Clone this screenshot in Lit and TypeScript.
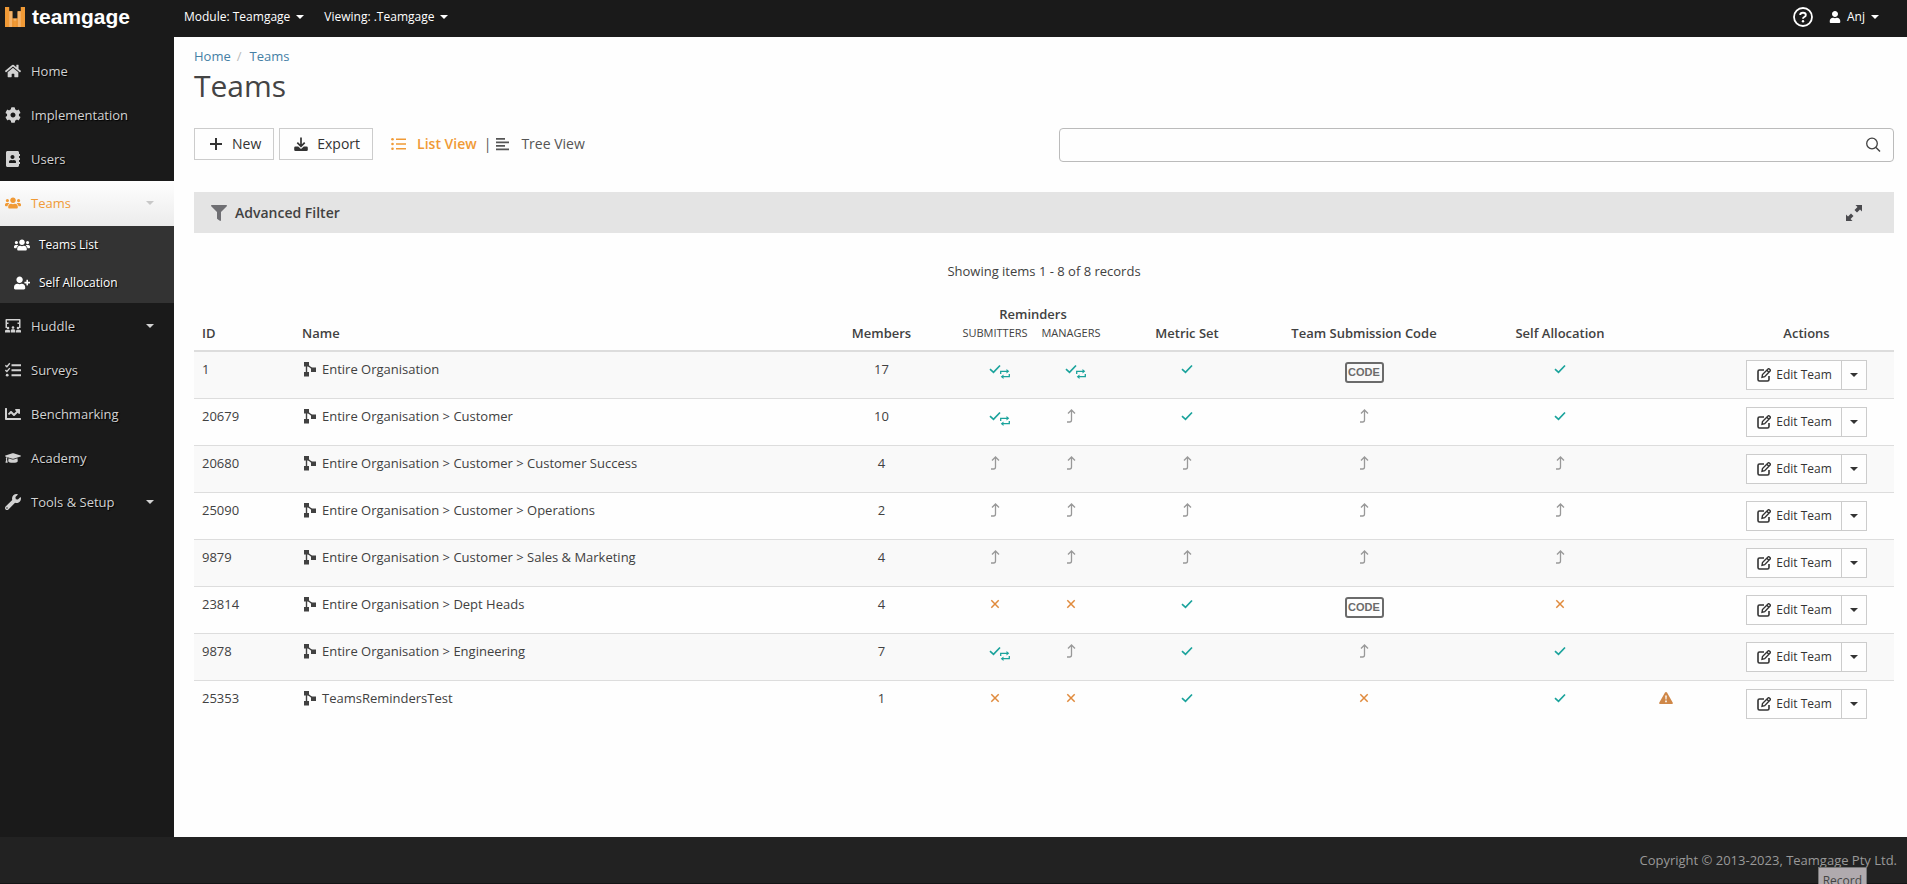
import { LitElement, html, svg, css, nothing } from "lit";
import { customElement } from "lit/decorators.js";
import { classMap } from "lit/directives/class-map.js";

type Status = "repeat" | "check" | "inherit" | "cross" | "code";

interface Team {
  id: string;
  name: string;
  members: number;
  submitters: Status;
  managers: Status;
  metric: Status;
  code: Status;
  self: Status;
  warning?: boolean;
}

const teams: Team[] = [
  { id: "1", name: "Entire Organisation", members: 17, submitters: "repeat", managers: "repeat", metric: "check", code: "code", self: "check" },
  { id: "20679", name: "Entire Organisation > Customer", members: 10, submitters: "repeat", managers: "inherit", metric: "check", code: "inherit", self: "check" },
  { id: "20680", name: "Entire Organisation > Customer > Customer Success", members: 4, submitters: "inherit", managers: "inherit", metric: "inherit", code: "inherit", self: "inherit" },
  { id: "25090", name: "Entire Organisation > Customer > Operations", members: 2, submitters: "inherit", managers: "inherit", metric: "inherit", code: "inherit", self: "inherit" },
  { id: "9879", name: "Entire Organisation > Customer > Sales & Marketing", members: 4, submitters: "inherit", managers: "inherit", metric: "inherit", code: "inherit", self: "inherit" },
  { id: "23814", name: "Entire Organisation > Dept Heads", members: 4, submitters: "cross", managers: "cross", metric: "check", code: "code", self: "cross" },
  { id: "9878", name: "Entire Organisation > Engineering", members: 7, submitters: "repeat", managers: "inherit", metric: "check", code: "inherit", self: "check" },
  { id: "25353", name: "TeamsRemindersTest", members: 1, submitters: "cross", managers: "cross", metric: "check", code: "cross", self: "check", warning: true },
];

const shapes = {
  home: { box: "0 0 576 512", art: svg`<path d="M280.37 148.26L96 300.11V464a16 16 0 0 0 16 16l112.06-.29a16 16 0 0 0 15.92-16V368a16 16 0 0 1 16-16h64a16 16 0 0 1 16 16v95.64a16 16 0 0 0 16 16.05L464 480a16 16 0 0 0 16-16V300L295.67 148.26a12.19 12.19 0 0 0-15.3 0zM571.6 251.47L488 182.56V44.05a12 12 0 0 0-12-12h-56a12 12 0 0 0-12 12v72.61L318.47 43a48 48 0 0 0-61 0L4.34 251.47a12 12 0 0 0-1.6 16.9l25.5 31A12 12 0 0 0 45.15 301l235.22-193.74a12.19 12.19 0 0 1 15.3 0L530.9 301a12 12 0 0 0 16.9-1.6l25.5-31a12 12 0 0 0-1.7-16.93z"/>` },
  cog: { box: "0 0 512 512", art: svg`<path d="M487.4 315.7l-42.6-24.6c4.3-23.2 4.3-47 0-70.2l42.6-24.6c4.9-2.8 7.1-8.6 5.5-14-11.1-35.6-30-67.8-54.7-94.6-3.8-4.1-10-5.1-14.8-2.3L380.8 110c-17.9-15.4-38.5-27.3-60.8-35.1V25.8c0-5.6-3.9-10.5-9.4-11.7-36.7-8.2-74.3-7.8-109.2 0-5.5 1.2-9.4 6.1-9.4 11.7V75c-22.2 7.9-42.8 19.8-60.8 35.1L88.7 85.5c-4.9-2.8-11-1.9-14.8 2.3-24.7 26.7-43.6 58.9-54.7 94.6-1.7 5.4.6 11.2 5.5 14L67.3 221c-4.3 23.2-4.3 47 0 70.2l-42.6 24.6c-4.9 2.8-7.1 8.6-5.5 14 11.1 35.6 30 67.8 54.7 94.6 3.8 4.1 10 5.1 14.8 2.3l42.6-24.6c17.9 15.4 38.5 27.3 60.8 35.1v49.2c0 5.6 3.9 10.5 9.4 11.7 36.7 8.2 74.3 7.8 109.2 0 5.5-1.2 9.4-6.1 9.4-11.7v-49.2c22.2-7.9 42.8-19.8 60.8-35.1l42.6 24.6c4.9 2.8 11 1.9 14.8-2.3 24.7-26.7 43.6-58.9 54.7-94.6 1.5-5.5-.7-11.3-5.6-14.1zM256 336c-44.1 0-80-35.9-80-80s35.9-80 80-80 80 35.9 80 80-35.9 80-80 80z"/>` },
  book: { box: "-16 0 480 512", art: svg`<path d="M436 160c6.6 0 12-5.4 12-12v-40c0-6.6-5.4-12-12-12h-20V48c0-26.5-21.5-48-48-48H48C21.5 0 0 21.5 0 48v416c0 26.5 21.5 48 48 48h320c26.5 0 48-21.5 48-48v-48h20c6.6 0 12-5.4 12-12v-40c0-6.6-5.4-12-12-12h-20v-64h20c6.6 0 12-5.4 12-12v-40c0-6.6-5.4-12-12-12h-20v-64h20zm-228-32c35.3 0 64 28.7 64 64s-28.7 64-64 64-64-28.7-64-64 28.7-64 64-64zm112 236.8c0 10.6-10 19.2-22.4 19.2H118.4C106 384 96 375.4 96 364.8v-19.2c0-31.8 30.1-57.6 67.2-57.6h5c12.3 5.1 25.7 8 39.8 8s27.6-2.9 39.8-8h5c37.1 0 67.2 25.8 67.2 57.6v19.2z"/>` },
  users: { box: "0 0 640 512", art: svg`<path d="M96 224c35.3 0 64-28.7 64-64s-28.7-64-64-64-64 28.7-64 64 28.7 64 64 64zm448 0c35.3 0 64-28.7 64-64s-28.7-64-64-64-64 28.7-64 64 28.7 64 64 64zm32 32h-64c-17.6 0-33.5 7.1-45.1 18.6 40.3 22.1 68.9 62 75.1 109.4h66c17.7 0 32-14.3 32-32v-32c0-35.3-28.7-64-64-64zm-256 0c61.9 0 112-50.1 112-112S381.9 32 320 32 208 82.1 208 144s50.1 112 112 112zm76.8 32h-8.3c-20.8 10-43.9 16-68.5 16s-47.6-6-68.5-16h-8.3C179.6 288 128 339.6 128 403.2V432c0 26.5 21.5 48 48 48h288c26.5 0 48-21.5 48-48v-28.8c0-63.6-51.6-115.2-115.2-115.2zm-223.7-13.4C161.5 263.1 145.6 256 128 256H64c-35.3 0-64 28.7-64 64v32c0 17.7 14.3 32 32 32h65.9c6.3-47.4 34.9-87.3 75.2-109.4z"/>` },
  userPlus: { box: "0 0 640 512", art: svg`<path d="M624 208h-64v-64c0-8.8-7.2-16-16-16h-32c-8.8 0-16 7.2-16 16v64h-64c-8.8 0-16 7.2-16 16v32c0 8.8 7.2 16 16 16h64v64c0 8.8 7.2 16 16 16h32c8.8 0 16-7.2 16-16v-64h64c8.8 0 16-7.2 16-16v-32c0-8.8-7.2-16-16-16zm-400 48c70.7 0 128-57.3 128-128S294.7 0 224 0 96 57.3 96 128s57.3 128 128 128zm89.6 32h-16.7c-22.2 10.2-46.9 16-72.9 16s-50.6-5.8-72.9-16h-16.7C60.2 288 0 348.2 0 422.4V464c0 26.5 21.5 48 48 48h352c26.5 0 48-21.5 48-48v-41.6c0-74.2-60.2-134.4-134.4-134.4z"/>` },
  huddle: { box: "0 0 16 16", art: svg`<path d="M0.500 10V1.800Q.5 1 1.300 1H14.700Q15.500 1 15.500 1.800V10H14V2.500H2V10Z"/><circle cx="3" cy="10" r="1.300"/><circle cx="8" cy="9.500" r="1.300"/><circle cx="13" cy="10" r="1.300"/><path d="M2 4.500h1.500v1.500H2zM12.500 4.500H14v1.500h-1.500z"/><path d="M0 14.500v-1.500q0-1.300 1.500-1.300h2q1.500 0 1.500 1.300v1.500zM5.700 14.500v-1.700q0-1.500 1.300-1.500h2q1.300 0 1.300 1.500v1.700zM11 14.500v-1.500q0-1.300 1.500-1.300h2q1.500 0 1.500 1.300v1.500z"/>` },
  tasks: { box: "0 0 16 16", art: svg`<path d="M6.500 2.200h9.500v2H6.500zM6.500 7.200h9.500v2H6.500zM6.500 12.200h9.500v2H6.500z"/><circle cx="2.200" cy="13.200" r="1.400"/><path d="M.4 3.300l1.500 1.400L4.800 1.300M.4 8.100l1.500 1.400 2.900-3.400" fill="none" stroke="currentColor" stroke-width="1.400"/>` },
  chart: { box: "0 0 512 512", art: svg`<path d="M496 384H64V80c0-8.84-7.16-16-16-16H16C7.16 64 0 71.16 0 80v336c0 17.67 14.33 32 32 32h464c8.84 0 16-7.16 16-16v-32c0-8.84-7.16-16-16-16zM464 96H345.94c-21.38 0-32.09 25.85-16.97 40.97l32.4 32.4L288 242.75l-73.37-73.37c-12.5-12.5-32.76-12.5-45.25 0l-68.69 68.69c-6.25 6.25-6.25 16.38 0 22.63l22.62 22.62c6.25 6.25 16.38 6.25 22.63 0L192 237.25l73.37 73.37c12.5 12.5 32.76 12.5 45.25 0l96-96 32.4 32.4c15.12 15.12 40.97 4.41 40.97-16.97V112c.01-8.84-7.15-16-15.99-16z"/>` },
  cap: { box: "0 0 640 512", art: svg`<path d="M622.34 153.2L343.4 67.5c-15.2-4.67-31.6-4.67-46.79 0L17.66 153.2c-23.54 7.23-23.54 38.36 0 45.59l48.63 14.94c-10.67 13.19-17.23 29.28-17.88 46.9C38.78 266.15 32 276.11 32 288c0 10.78 5.68 19.85 13.86 25.65L20.33 428.53C18.11 438.52 25.71 448 35.94 448h56.11c10.24 0 17.84-9.48 15.62-19.47L82.14 313.65C90.32 307.85 96 298.78 96 288c0-11.57-6.47-21.25-15.66-26.87.76-15.02 8.44-28.3 20.69-36.72L296.6 284.5c9.06 2.78 26.44 6.25 46.79 0l278.95-85.7c23.55-7.24 23.55-38.36 0-45.6zM352.79 315.09c-28.53 8.76-52.84 3.92-65.59 0l-145.02-44.55L128 384c0 35.35 85.96 64 192 64s192-28.65 192-64l-14.18-113.47-145.03 44.56z"/>` },
  wrench: { box: "0 0 512 512", art: svg`<path d="M507.73 109.1c-2.24-9.03-13.54-12.09-20.12-5.51l-74.36 74.36-67.88-11.31-11.31-67.88 74.36-74.36c6.62-6.62 3.43-17.9-5.66-20.16-47.38-11.74-99.55.91-136.58 37.93-39.64 39.64-50.55 97.1-34.05 147.2L18.74 402.76c-24.99 24.99-24.99 65.51 0 90.5 24.99 24.99 65.51 24.99 90.5 0l213.21-213.21c50.12 16.71 107.47 5.68 147.37-34.22 37.07-37.07 49.7-89.32 37.91-136.73zM64 472c-13.25 0-24-10.75-24-24 0-13.26 10.75-24 24-24s24 10.74 24 24c0 13.25-10.75 24-24 24z"/>` },
  filter: { box: "0 0 512 512", art: svg`<path d="M487.976 0H24.028C2.71 0-8.047 25.866 7.058 40.971L192 225.941V432c0 7.831 3.821 15.17 10.237 19.662l80 55.98C298.02 518.69 320 507.493 320 487.98V225.941l184.947-184.97C520.021 25.896 509.338 0 487.976 0z"/>` },
  user: { box: "0 0 448 512", art: svg`<path d="M224 256c70.7 0 128-57.3 128-128S294.700 0 224 0 96 57.300 96 128s57.300 128 128 128zm89.600 32h-16.700c-22.200 10.200-46.900 16-72.900 16s-50.600-5.800-72.900-16h-16.700C60.200 288 0 348.200 0 422.400V464c0 26.500 21.500 48 48 48h352c26.500 0 48-21.500 48-48v-41.600c0-74.200-60.200-134.400-134.400-134.400z"/>` },
  help: { box: "0 0 20 20", art: svg`<circle cx="10" cy="10" r="9" fill="none" stroke="currentColor" stroke-width="1.800"/><path d="M7.200 8Q7.200 5.700 10 5.700T12.800 8Q12.800 9.300 11.300 10Q10 10.600 10 11.700" fill="none" stroke="currentColor" stroke-width="1.900"/><circle cx="10" cy="14.200" r="1.200"/>` },
  plus: { box: "0 0 16 16", art: svg`<path d="M7 2h2v5h5v2H9v5H7V9H2V7h5z"/>` },
  download: { box: "0 0 16 16", art: svg`<path d="M8 1.500V10M4.300 6.600L8 10.300l3.700-3.700" fill="none" stroke="currentColor" stroke-width="1.700"/><path d="M2.500 10.500h2.700L8 13l2.800-2.500h2.700q1.300 0 1.300 1.300v1.900q0 1.300-1.300 1.300h-11q-1.300 0-1.300-1.300v-1.900q0-1.300 1.300-1.300z"/>` },
  list: { box: "0 0 16 16", art: svg`<path d="M5 2.500h10v1.500H5zM5 7.300h10v1.500H5zM5 12h10v1.500H5z"/><circle cx="1.500" cy="3.200" r="1.300"/><circle cx="1.500" cy="8" r="1.300"/><circle cx="1.500" cy="12.800" r="1.300"/>` },
  tree: { box: "0 0 16 16", art: svg`<path d="M1 2h9v1.700H1zM1 5.500h13v1.700H1zM1 9h9v1.700H1zM1 12.500h13v1.700H1z"/>` },
  search: { box: "0 0 16 16", art: svg`<path d="M11 10.500l4 4" stroke="currentColor" stroke-width="1.500"/><circle cx="7" cy="6.500" r="5.300" fill="none" stroke="currentColor" stroke-width="1.300"/>` },
  expand: { box: "0 0 16 16", art: svg`<path d="M9.500 0H16v6.500l-2-2-3 3L8.500 5l3-3zM6.500 16H0V9.500l2 2 3-3L7.500 11l-3 3z"/>` },
  node: { box: "0 0 14 16", art: svg`<path d="M1 1h5v4.500H1zM1 11h5v4.500H1zM8 6.500h5v4.500H8z"/><path d="M3.500 4v8M4.500 4l5 4" fill="none" stroke="currentColor" stroke-width="1.400"/>` },
  check: { box: "0 0 12 12", art: svg`<path d="M1 6.200l3.500 3.200L11 2.500" fill="none" stroke="currentColor" stroke-width="1.700"/>` },
  repeat: { box: "0 0 12 12", art: svg`<path d="M1.700 6V3.300H8M10.300 6v2.700H4" fill="none" stroke="currentColor" stroke-width="1.300"/><path d="M7.500 1l2.800 2.300-2.800 2.300zM4.500 6.400L1.700 8.700 4.500 11z"/>` },
  inherit: { box: "0 0 10 14", art: svg`<path d="M1 13h2.600Q5.500 13 5.500 11V1.500M2 4.500L5.500 1 9 4.500" fill="none" stroke="currentColor" stroke-width="1.300"/>` },
  cross: { box: "0 0 10 10", art: svg`<path d="M1.300 1.300l7.400 7.400M8.700 1.300L1.300 8.700" fill="none" stroke="currentColor" stroke-width="1.500"/>` },
  warn: { box: "0 0 14 12", art: svg`<path fill-rule="evenodd" d="M7 0q.7 0 1 .6l5.800 10.200q.4 1.200-.9 1.200H1.100q-1.300 0-.9-1.200L6 .6Q6.300 0 7 0zM6.200 3.500l.3 4h1l.3-4zM6.200 8.500v1.700h1.600V8.500z"/>` },
  edit: { box: "1 1 14 14", art: svg`<path d="M8 3H3.500Q2 3 2 4.500v8Q2 14 3.500 14h8q1.500 0 1.500-1.500V9" fill="none" stroke="currentColor" stroke-width="1.600"/><path d="M6 10.300l.5-2.800L12 2q.7-.6 1.400 0l.7.700q.6.700 0 1.400L8.700 9.700zM11 3.400l1.700 1.700" fill="none" stroke="currentColor" stroke-width="1.400"/>` },
  caret: { box: "0 0 8 4", art: svg`<path d="M0 0h8L4 4z"/>` },
  brand: { box: "0 0 19 19", art: svg`<path fill="#f09a36" d="M0 0h4v4h3v7h5V4h3V0h4v19H0z"/><path fill="#f4b36b" d="M4 4h3v15H4zM12 4h3v15h-3z"/><path fill="#f4b36b" d="M8 11h3v2H8z"/><path fill="#e88f2d" d="M7 11h1v8H7zM11 11h1v8h-1z"/>` },
};

type IconName = keyof typeof shapes;

const icon = (name: IconName, size = "i16") =>
  html`<svg class="icon ${size}" viewBox=${shapes[name].box} aria-hidden="true">${shapes[name].art}</svg>`;

@customElement("app-root")
export class AppRoot extends LitElement {
  static styles = css`
    :host {
      display: flex;
      flex-direction: column;
      min-height: 100vh;
      background: #fefefe;
      color: #414141;
      font: 13px/18px "Open Sans", sans-serif;
      position: relative;
      overflow: hidden;
    }
    * { box-sizing: border-box; }
    button, input { font: inherit; color: inherit; margin: 0; border-radius: 0; }
    button { cursor: pointer; }
    a { text-decoration: none; color: inherit; }
    .icon { fill: currentColor; flex: none; display: block; }
    .i10 { width: 10px; height: 10px; }
    .i12 { width: 12px; height: 12px; }
    .i14 { width: 14px; height: 14px; }
    .i16 { width: 16px; height: 16px; }
    .i20 { width: 20px; height: 20px; }
    .tall { width: 10px; height: 14px; }
    .caret { width: 8px; height: 4px; }

    .top {
      display: flex;
      align-items: center;
      height: 37px;
      padding-bottom: 4px;
      background: #1a1a1a;
      color: #fff;
      font-size: 12px;
    }
    .brand {
      display: flex;
      align-items: center;
      gap: 7px;
      width: 184px;
      padding-left: 5px;
      font: bold 21px/24px "Liberation Sans", sans-serif;
    }
    .menus { display: flex; gap: 20px; flex: 1; }
    .plain {
      display: flex;
      align-items: center;
      gap: 6px;
      padding: 0;
      border: 0;
      background: none;
    }
    .account { display: flex; gap: 16px; padding-right: 28px; }

    .body { display: flex; flex: 1; }
    .side {
      width: 174px;
      flex: none;
      padding-top: 12px;
      background: #1a1a1a;
      color: #d2d2d2;
      text-shadow: 1px 1px 1px #000;
    }
    .side ul { list-style: none; margin: 0; padding: 0; }
    .side a {
      display: flex;
      align-items: center;
      gap: 10px;
      height: 44px;
      padding: 0 20px 0 5px;
    }
    .side .label { flex: 1; }
    .side a.active {
      height: 45px;
      padding-bottom: 2px;
      background: linear-gradient(#fefefe, #ececec);
      color: #f09a36;
      text-shadow: none;
    }
    .side a.active .caret { color: #c8c8c8; }
    .side .sub { background: #333; color: #fff; padding-bottom: 1px; margin-bottom: 1px; }
    .side .sub a { height: 38px; padding-left: 14px; gap: 9px; font-size: 12px; }

    main { flex: 1; min-width: 0; padding: 10px 13px 20px 20px; }
    .crumbs { display: flex; gap: 6px; color: #4580a5; }
    .crumbs .sep { color: #bbb; }
    .crumbs .sep + a { margin-left: 2px; }
    h1 { margin: 2px 0 23px; font-weight: 400; font-size: 30px; line-height: 38px; color: #444; }
    .tools { display: flex; align-items: flex-start; }
    .btn {
      display: flex;
      align-items: center;
      gap: 8px;
      height: 32px;
      padding: 0 12px 0 13px;
      margin-right: 5px;
      border: 1px solid #ccc;
      background: #fefefe;
      font-size: 14px;
      color: #333;
    }
    .views { display: flex; align-items: center; height: 32px; padding-left: 13px; font-size: 14px; color: #555; }
    .views a { display: flex; align-items: center; gap: 10px; }
    .views .on { color: #f09a36; font-weight: 600; }
    .views .bar { padding: 0 4px 0 7px; }
    .search {
      display: flex;
      align-items: center;
      width: 49.1%;
      height: 34px;
      margin-left: auto;
      padding-right: 12px;
      border: 1px solid #bbb;
      border-radius: 4px;
    }
    .search input { flex: 1; height: 100%; padding: 0 12px; border: 0; outline: 0; background: none; }
    .filter {
      display: flex;
      align-items: center;
      gap: 8px;
      width: 100%;
      height: 41px;
      margin-top: 30px;
      padding: 0 32px 0 17px;
      border: 0;
      background: #e4e4e4;
      font-size: 14px;
      font-weight: 600;
      text-align: left;
    }
    .filter .icon { color: #6f6f73; }
    .filter .title { flex: 1; }
    .filter .title + .icon { color: #4a4a4e; }
    .count { margin: 29px 0 17px; text-align: center; }

    table { width: 100%; table-layout: fixed; border-collapse: separate; border-spacing: 0; }
    .w-id { width: 100px; }
    .w-members { width: 151px; }
    .w-rem { width: 76px; }
    .w-metric { width: 156px; }
    .w-code { width: 198px; }
    .w-self { width: 194px; }
    .w-warn { width: 62px; }
    .w-actions { width: 175px; }
    th { padding: 0 0 8px; font-weight: 600; vertical-align: bottom; border-bottom: 2px solid #ddd; }
    th.group { border: 0; padding: 8px 0 1px; }
    th.minor { font-weight: 400; font-size: 11px; text-transform: uppercase; }
    td { padding: 8px 0; border-top: 1px solid #ddd; vertical-align: top; text-align: center; }
    th.text, td.text { padding-left: 8px; text-align: left; }
    tbody tr:first-child td { border-top: 0; }
    tbody tr:nth-child(odd) td { background: #f9f9f9; }
    .cell { display: flex; justify-content: center; align-items: center; height: 18px; }
    .name { display: flex; align-items: center; gap: 4px; height: 18px; white-space: nowrap; }
    .teal { color: #1ba39c; }
    .grey { color: #999; }
    .orange { color: #e08a3c; }
    .pair { display: flex; padding-left: 10px; }
    .pair .icon + .icon { margin: 5px 0 -5px -2px; }
    .code {
      display: inline-block;
      margin-top: 2px;
      width: 39px;
      height: 21px;
      border: 2px solid #6b6b6b;
      border-radius: 3px;
      font: bold 11px/17px "Liberation Sans", sans-serif;
      color: #6b6b6b;
    }
    .warn { display: flex; align-items: center; height: 18px; padding-left: 2px; color: #cf8748; }
    .split { display: inline-flex; height: 30px; border: 1px solid #ccc; background: #fefefe; }
    .split button { display: flex; align-items: center; gap: 5px; border: 0; background: none; padding: 0 9px 0 10px; font-size: 12px; color: #333; }
    .split button + button { border-left: 1px solid #ccc; padding: 0 8px; }

    footer {
      display: flex;
      justify-content: flex-end;
      height: 47px;
      padding: 14px 10px 0;
      background: #222;
      border-bottom: 1px solid #151515;
      color: #999;
    }
    .record {
      position: absolute;
      right: 40px;
      bottom: -12px;
      height: 29px;
      padding: 4px;
      border: 1px solid #777;
      background: #b0aaae;
      color: #444;
      font-size: 12px;
    }
  `;

  private status(s: Status) {
    if (s === "code") return html`<span class="code">CODE</span>`;
    if (s === "repeat")
      return html`<span class="cell teal" role="img" aria-label="On, repeating"><span class="pair">${icon("check", "i12")}${icon("repeat", "i12")}</span></span>`;
    if (s === "check") return html`<span class="cell teal" role="img" aria-label="On">${icon("check", "i12")}</span>`;
    if (s === "cross") return html`<span class="cell orange" role="img" aria-label="Off">${icon("cross", "i10")}</span>`;
    return html`<span class="cell grey" role="img" aria-label="Inherited">${icon("inherit", "tall")}</span>`;
  }

  private navItem(name: IconName, label: string, caret = false, active = false) {
    return html`<a href="#" class=${classMap({ active })}>
      ${icon(name)}<span class="label">${label}</span>${caret ? icon("caret", "caret") : nothing}
    </a>`;
  }

  private row(t: Team) {
    return html`<tr>
      <td class="text">${t.id}</td>
      <td class="text"><span class="name">${icon("node")}${t.name}</span></td>
      <td>${t.members}</td>
      <td>${this.status(t.submitters)}</td>
      <td>${this.status(t.managers)}</td>
      <td>${this.status(t.metric)}</td>
      <td>${this.status(t.code)}</td>
      <td>${this.status(t.self)}</td>
      <td>${t.warning ? html`<span class="warn" role="img" aria-label="Warning">${icon("warn", "i14")}</span>` : nothing}</td>
      <td>
        <span class="split">
          <button type="button">${icon("edit", "i14")}Edit Team</button>
          <button type="button" aria-label="More actions">${icon("caret", "caret")}</button>
        </span>
      </td>
    </tr>`;
  }

  render() {
    return html`
      <header class="top">
        <a class="brand" href="#">${icon("brand", "i20")}teamgage</a>
        <div class="menus">
          <button class="plain" type="button">Module: Teamgage ${icon("caret", "caret")}</button>
          <button class="plain" type="button">Viewing: .Teamgage ${icon("caret", "caret")}</button>
        </div>
        <div class="account">
          <button class="plain" type="button" aria-label="Help">${icon("help", "i20")}</button>
          <button class="plain" type="button">${icon("user", "i12")}Anj ${icon("caret", "caret")}</button>
        </div>
      </header>
      <div class="body">
        <nav class="side">
          <ul>
            <li>${this.navItem("home", "Home")}</li>
            <li>${this.navItem("cog", "Implementation")}</li>
            <li>${this.navItem("book", "Users")}</li>
            <li>
              ${this.navItem("users", "Teams", true, true)}
              <ul class="sub">
                <li>${this.navItem("users", "Teams List")}</li>
                <li>${this.navItem("userPlus", "Self Allocation")}</li>
              </ul>
            </li>
            <li>${this.navItem("huddle", "Huddle", true)}</li>
            <li>${this.navItem("tasks", "Surveys")}</li>
            <li>${this.navItem("chart", "Benchmarking")}</li>
            <li>${this.navItem("cap", "Academy")}</li>
            <li>${this.navItem("wrench", "Tools & Setup", true)}</li>
          </ul>
        </nav>
        <main>
          <nav class="crumbs"><a href="#">Home</a><span class="sep">/</span><a href="#">Teams</a></nav>
          <h1>Teams</h1>
          <div class="tools">
            <button class="btn" type="button">${icon("plus")}New</button>
            <button class="btn" type="button">${icon("download")}Export</button>
            <div class="views">
              <a class="on" href="#">${icon("list")}List View</a>
              <span class="bar">|</span>
              <a href="#">${icon("tree")}Tree View</a>
            </div>
            <label class="search"><input type="text" aria-label="Search teams" />${icon("search")}</label>
          </div>
          <button class="filter" type="button">${icon("filter")}<span class="title">Advanced Filter</span>${icon("expand")}</button>
          <p class="count">Showing items 1 - 8 of 8 records</p>
          <table>
            <colgroup>
              <col class="w-id" /><col /><col class="w-members" /><col class="w-rem" /><col class="w-rem" />
              <col class="w-metric" /><col class="w-code" /><col class="w-self" /><col class="w-warn" /><col class="w-actions" />
            </colgroup>
            <thead>
              <tr>
                <th rowspan="2" class="text">ID</th>
                <th rowspan="2" class="text">Name</th>
                <th rowspan="2">Members</th>
                <th colspan="2" class="group">Reminders</th>
                <th rowspan="2">Metric Set</th>
                <th rowspan="2">Team Submission Code</th>
                <th rowspan="2">Self Allocation</th>
                <th rowspan="2"></th>
                <th rowspan="2">Actions</th>
              </tr>
              <tr><th class="minor">Submitters</th><th class="minor">Managers</th></tr>
            </thead>
            <tbody>${teams.map((t) => this.row(t))}</tbody>
          </table>
        </main>
      </div>
      <footer>Copyright © 2013-2023, Teamgage Pty Ltd.</footer>
      <div class="record">Record</div>
    `;
  }
}
